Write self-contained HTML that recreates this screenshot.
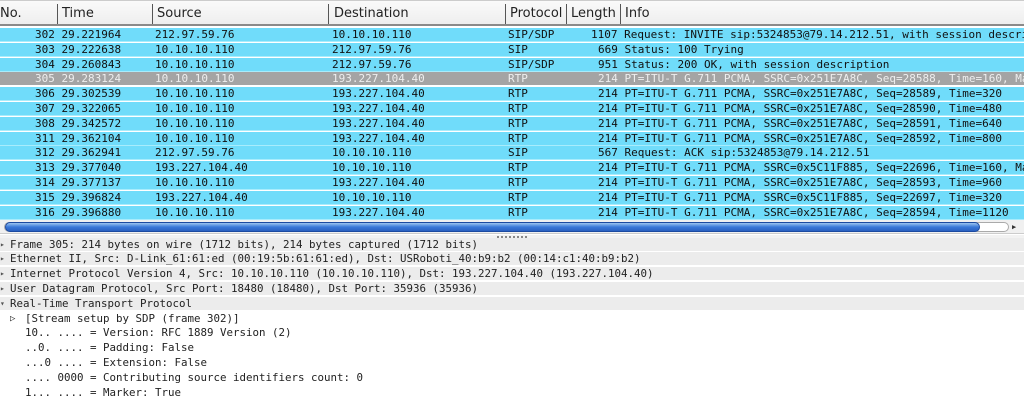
<!DOCTYPE html>
<html><head><style>
*{margin:0;padding:0;box-sizing:border-box}
body{width:1024px;height:400px;overflow:hidden;background:#fff;font-family:"DejaVu Sans Mono","Liberation Mono",monospace;font-size:11px;color:#111;position:relative}
.hdr{position:absolute;top:0;left:0;width:1024px;height:26px;background:linear-gradient(#fafafa,#eeeeee);border-bottom:2px solid #8a8a8a;border-top:1px solid #ccc;font-family:"DejaVu Sans","Liberation Sans",sans-serif;font-size:13px;color:#222}
.hdr span{position:absolute;top:5px}
.hdr i{position:absolute;top:3px;height:20px;border-left:1px solid #555}
.row{position:absolute;left:0;width:1024px;height:14px;background:#70dcfa;border-bottom:1px solid #a8ecfc;white-space:pre;line-height:14px}
.row.sel{background:#a4a4a4;color:#eee;border-bottom:1px solid #fff}
.row span{position:absolute;top:0}
.sb{position:absolute;top:220px;left:0;width:1024px;height:14px;background:#f0f0f0;border-bottom:1px solid #ccc}
.split{position:absolute;top:235px;left:0;width:1024px;height:6px;background:#f2f2f2;border-bottom:1px solid #ddd}
.d{position:absolute;left:0;width:1024px;height:14px;line-height:14px;white-space:pre;color:#222;font-size:10.8px}
.d.top{background:#ececec;border-bottom:1px solid #fff}
.d span{position:absolute;top:0}
.d b{font-weight:normal;position:absolute;left:0;color:#555;font-size:8px}
</style></head><body>
<div class="hdr">
<span style="left:0">No.</span><i style="left:57px"></i>
<span style="left:62px">Time</span><i style="left:152px"></i>
<span style="left:157px">Source</span><i style="left:328px"></i>
<span style="left:334px">Destination</span><i style="left:505px"></i>
<span style="left:510px">Protocol</span><i style="left:566px"></i>
<span style="left:571px">Length</span><i style="left:620px"></i>
<span style="left:625px">Info</span>
</div>
<div class="row" style="top:28px"><span style="left:35px">302 29.221964</span><span style="left:155px">212.97.59.76</span><span style="left:332px">10.10.10.110</span><span style="left:508px">SIP/SDP</span><span style="left:591px">1107 Request: INVITE sip:5324853@79.14.212.51, with session description</span></div>
<div class="row" style="top:42.8px"><span style="left:35px">303 29.222638</span><span style="left:155px">10.10.10.110</span><span style="left:332px">212.97.59.76</span><span style="left:508px">SIP</span><span style="left:598px">669 Status: 100 Trying</span></div>
<div class="row" style="top:57.6px"><span style="left:35px">304 29.260843</span><span style="left:155px">10.10.10.110</span><span style="left:332px">212.97.59.76</span><span style="left:508px">SIP/SDP</span><span style="left:598px">951 Status: 200 OK, with session description</span></div>
<div class="row sel" style="top:72.4px"><span style="left:35px">305 29.283124</span><span style="left:155px">10.10.10.110</span><span style="left:332px">193.227.104.40</span><span style="left:508px">RTP</span><span style="left:598px">214 PT=ITU-T G.711 PCMA, SSRC=0x251E7A8C, Seq=28588, Time=160, Mark</span></div>
<div class="row" style="top:87.2px"><span style="left:35px">306 29.302539</span><span style="left:155px">10.10.10.110</span><span style="left:332px">193.227.104.40</span><span style="left:508px">RTP</span><span style="left:598px">214 PT=ITU-T G.711 PCMA, SSRC=0x251E7A8C, Seq=28589, Time=320</span></div>
<div class="row" style="top:102px"><span style="left:35px">307 29.322065</span><span style="left:155px">10.10.10.110</span><span style="left:332px">193.227.104.40</span><span style="left:508px">RTP</span><span style="left:598px">214 PT=ITU-T G.711 PCMA, SSRC=0x251E7A8C, Seq=28590, Time=480</span></div>
<div class="row" style="top:116.8px"><span style="left:35px">308 29.342572</span><span style="left:155px">10.10.10.110</span><span style="left:332px">193.227.104.40</span><span style="left:508px">RTP</span><span style="left:598px">214 PT=ITU-T G.711 PCMA, SSRC=0x251E7A8C, Seq=28591, Time=640</span></div>
<div class="row" style="top:131.6px"><span style="left:35px">311 29.362104</span><span style="left:155px">10.10.10.110</span><span style="left:332px">193.227.104.40</span><span style="left:508px">RTP</span><span style="left:598px">214 PT=ITU-T G.711 PCMA, SSRC=0x251E7A8C, Seq=28592, Time=800</span></div>
<div class="row" style="top:146.4px"><span style="left:35px">312 29.362941</span><span style="left:155px">212.97.59.76</span><span style="left:332px">10.10.10.110</span><span style="left:508px">SIP</span><span style="left:598px">567 Request: ACK sip:5324853@79.14.212.51</span></div>
<div class="row" style="top:161.2px"><span style="left:35px">313 29.377040</span><span style="left:155px">193.227.104.40</span><span style="left:332px">10.10.10.110</span><span style="left:508px">RTP</span><span style="left:598px">214 PT=ITU-T G.711 PCMA, SSRC=0x5C11F885, Seq=22696, Time=160, Mark</span></div>
<div class="row" style="top:176px"><span style="left:35px">314 29.377137</span><span style="left:155px">10.10.10.110</span><span style="left:332px">193.227.104.40</span><span style="left:508px">RTP</span><span style="left:598px">214 PT=ITU-T G.711 PCMA, SSRC=0x251E7A8C, Seq=28593, Time=960</span></div>
<div class="row" style="top:190.8px"><span style="left:35px">315 29.396824</span><span style="left:155px">193.227.104.40</span><span style="left:332px">10.10.10.110</span><span style="left:508px">RTP</span><span style="left:598px">214 PT=ITU-T G.711 PCMA, SSRC=0x5C11F885, Seq=22697, Time=320</span></div>
<div class="row" style="top:205.6px"><span style="left:35px">316 29.396880</span><span style="left:155px">10.10.10.110</span><span style="left:332px">193.227.104.40</span><span style="left:508px">RTP</span><span style="left:598px">214 PT=ITU-T G.711 PCMA, SSRC=0x251E7A8C, Seq=28594, Time=1120</span></div>
<div class="sb">
<div style="position:absolute;left:4px;top:2px;width:1005px;height:10px;border:1px solid #aaa;border-radius:5px;background:#fff"></div>
<div style="position:absolute;left:5px;top:2px;width:975px;height:10px;border-radius:5px;background:linear-gradient(#9cc4f0,#3a78d8 50%,#2a60c0);border:1px solid #1c4aa0"></div>
<div style="position:absolute;left:1012px;top:3px;font-size:7px;color:#333">&#9654;</div>
</div>
<div class="split"><div style="position:absolute;left:497px;top:1px;width:30px;border-top:2px dotted #888"></div></div>
<div class="d top" style="top:237.5px"><b>&#9656;</b><span style="left:10px">Frame 305: 214 bytes on wire (1712 bits), 214 bytes captured (1712 bits)</span></div>
<div class="d top" style="top:252.3px"><b>&#9656;</b><span style="left:10px">Ethernet II, Src: D-Link_61:61:ed (00:19:5b:61:61:ed), Dst: USRoboti_40:b9:b2 (00:14:c1:40:b9:b2)</span></div>
<div class="d top" style="top:267.1px"><b>&#9656;</b><span style="left:10px">Internet Protocol Version 4, Src: 10.10.10.110 (10.10.10.110), Dst: 193.227.104.40 (193.227.104.40)</span></div>
<div class="d top" style="top:281.9px"><b>&#9656;</b><span style="left:10px">User Datagram Protocol, Src Port: 18480 (18480), Dst Port: 35936 (35936)</span></div>
<div class="d top" style="top:296.7px"><b>&#9662;</b><span style="left:10px">Real-Time Transport Protocol</span></div>
<div class="d" style="top:311.5px"><span style="left:10px;font-size:9px">&#9655;</span><span style="left:25px">[Stream setup by SDP (frame 302)]</span></div>
<div class="d" style="top:326.3px"><span style="left:25px">10.. .... = Version: RFC 1889 Version (2)</span></div>
<div class="d" style="top:341.1px"><span style="left:25px">..0. .... = Padding: False</span></div>
<div class="d" style="top:355.9px"><span style="left:25px">...0 .... = Extension: False</span></div>
<div class="d" style="top:370.7px"><span style="left:25px">.... 0000 = Contributing source identifiers count: 0</span></div>
<div class="d" style="top:385.5px"><span style="left:25px">1... .... = Marker: True</span></div>
</body></html>
